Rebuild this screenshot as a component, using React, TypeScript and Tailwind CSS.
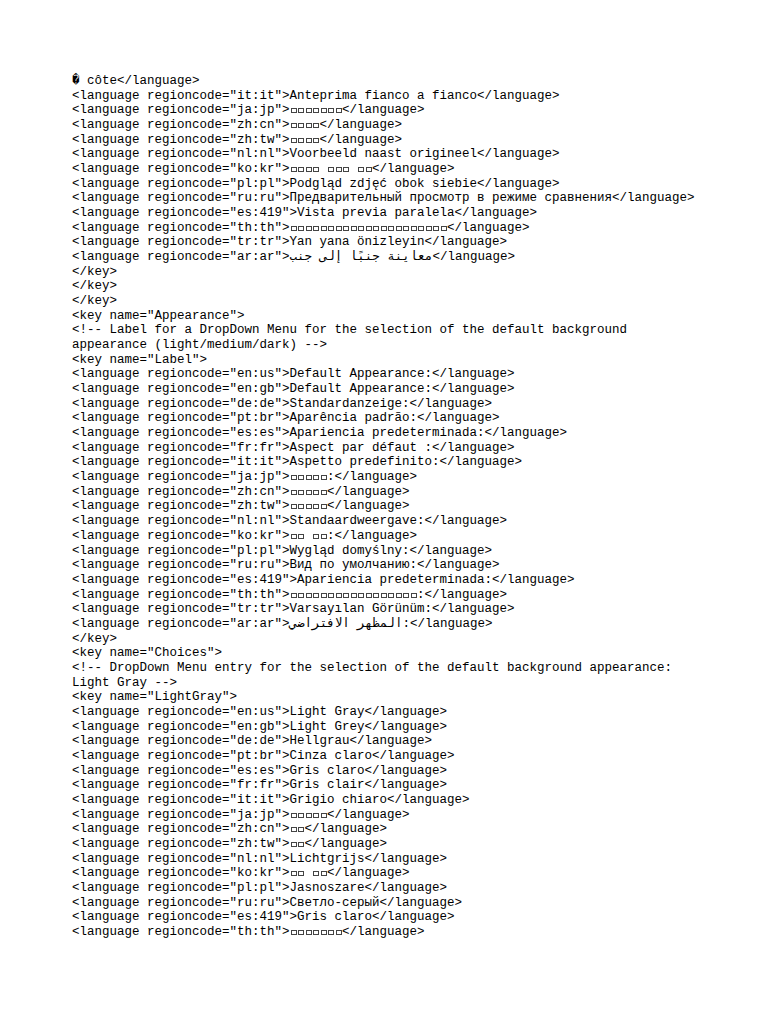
import React from "react";

// Tofu boxes stand in for glyphs the source font could not show
const Tofu = ({ n }: { n: number }) => (
  <>
    {Array.from({ length: n }).map((_, i) => (
      <span key={i} className="inline-block w-[1ch] align-baseline">
        <span className="inline-block w-[6px] h-[5px] ml-[1px] border border-[#444]" />
      </span>
    ))}
  </>
);

type Part = string | number;

const lang = (code: string, ...value: Part[]) => (
  <>
    {`<language regioncode="${code}">`}
    {value.map((v, i) => (typeof v === "number" ? <Tofu key={i} n={v} /> : <React.Fragment key={i}>{v}</React.Fragment>))}
    {"</language>"}
  </>
);

const lines: React.ReactNode[] = [
  "\uFFFD côte</language>",
  lang("it:it", "Anteprima fianco a fianco"),
  lang("ja:jp", 7),
  lang("zh:cn", 4),
  lang("zh:tw", 4),
  lang("nl:nl", "Voorbeeld naast origineel"),
  lang("ko:kr", 4, " ", 3, " ", 2),
  lang("pl:pl", "Podgląd zdjęć obok siebie"),
  lang("ru:ru", "Предварительный просмотр в режиме сравнения"),
  lang("es:419", "Vista previa paralela"),
  lang("th:th", 21),
  lang("tr:tr", "Yan yana önizleyin"),
  lang("ar:ar", "معاينة جنبًا إلى جنب"),
  "</key>",
  "</key>",
  "</key>",
  '<key name="Appearance">',
  "<!-- Label for a DropDown Menu for the selection of the default background",
  "appearance (light/medium/dark) -->",
  '<key name="Label">',
  lang("en:us", "Default Appearance:"),
  lang("en:gb", "Default Appearance:"),
  lang("de:de", "Standardanzeige:"),
  lang("pt:br", "Aparência padrão:"),
  lang("es:es", "Apariencia predeterminada:"),
  lang("fr:fr", "Aspect par défaut :"),
  lang("it:it", "Aspetto predefinito:"),
  lang("ja:jp", 5, ":"),
  lang("zh:cn", 5),
  lang("zh:tw", 5),
  lang("nl:nl", "Standaardweergave:"),
  lang("ko:kr", 2, " ", 2, ":"),
  lang("pl:pl", "Wygląd domyślny:"),
  lang("ru:ru", "Вид по умолчанию:"),
  lang("es:419", "Apariencia predeterminada:"),
  lang("th:th", 17, ":"),
  lang("tr:tr", "Varsayılan Görünüm:"),
  lang("ar:ar", "المظهر الافتراضي:"),
  "</key>",
  '<key name="Choices">',
  "<!-- DropDown Menu entry for the selection of the default background appearance:",
  "Light Gray -->",
  '<key name="LightGray">',
  lang("en:us", "Light Gray"),
  lang("en:gb", "Light Grey"),
  lang("de:de", "Hellgrau"),
  lang("pt:br", "Cinza claro"),
  lang("es:es", "Gris claro"),
  lang("fr:fr", "Gris clair"),
  lang("it:it", "Grigio chiaro"),
  lang("ja:jp", 5),
  lang("zh:cn", 2),
  lang("zh:tw", 2),
  lang("nl:nl", "Lichtgrijs"),
  lang("ko:kr", 2, " ", 2),
  lang("pl:pl", "Jasnoszare"),
  lang("ru:ru", "Светло-серый"),
  lang("es:419", "Gris claro"),
  lang("th:th", 7),
];

const App: React.FC = () => {
  return (
    <div className="min-h-screen w-[768px] bg-white pt-[74px] pl-[72px] font-['Liberation_Mono','DejaVu_Sans_Mono',monospace] text-[12.5px] leading-[14.67px] text-black">
      {lines.map((line, i) => (
        <div key={i} className="whitespace-pre">
          {line}
        </div>
      ))}
    </div>
  );
};

export default App;
